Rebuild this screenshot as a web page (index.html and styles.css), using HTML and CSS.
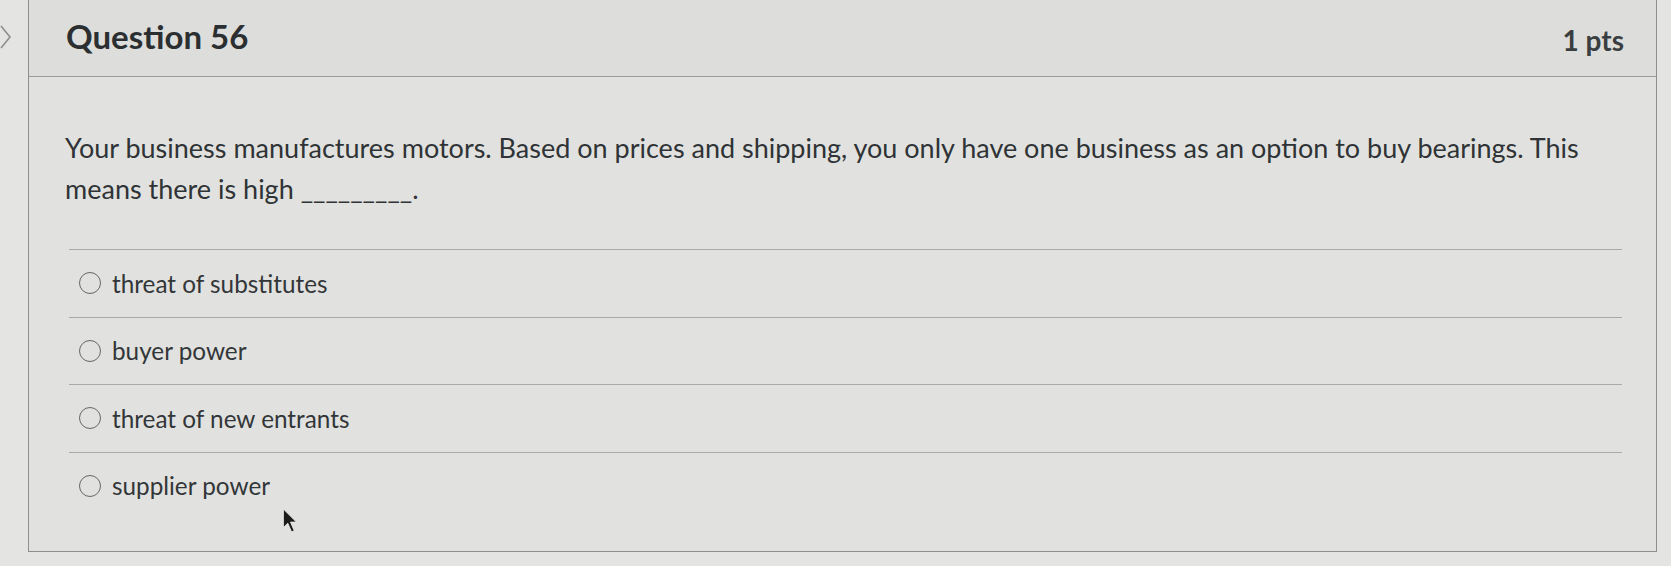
FILE: index.html
```html
<!DOCTYPE html>
<html lang="en">

<head>
  <meta charset="UTF-8">
  <meta name="viewport" content="width=device-width, initial-scale=1.0">
  <title>Question 56</title>
  <link rel="stylesheet" href="styles.css">
</head>

<body>
  <div class="page">
    <!-- side toggle -->
    <div class="side">
      <svg class="chevron" width="12" height="30" viewBox="0 0 12 30">
        <path d="M1 4 L10 15 L1 26" fill="none" stroke="#8d8f8d" stroke-width="1.6" />
      </svg>
    </div>

    <!-- question card -->
    <div class="question">
      <div class="header">
        <span class="name">Question 56</span>
        <span class="points">1 pts</span>
      </div>

      <div class="content">
        <p class="text">
          Your business manufactures motors. Based on prices and shipping, you only have one business as an option to buy bearings. This means there is high _________.
        </p>

        <div class="answers">
          <label class="answer"><span class="radio"></span>threat of substitutes</label>
          <label class="answer"><span class="radio"></span>buyer power</label>
          <label class="answer"><span class="radio"></span>threat of new entrants</label>
          <label class="answer"><span class="radio"></span>supplier power</label>
        </div>
      </div>

      <!-- mouse pointer -->
      <svg class="cursor" width="18" height="26" viewBox="0 0 16 24">
        <path d="M1 1 L1 18 L5 14 L8.5 22 L11 21 L7.5 13 L13 13 Z" fill="#1c1c1c" stroke="#e9e9e6" stroke-width="0.8" />
      </svg>
    </div>
  </div>
</body>

</html>
```

FILE: styles.css
```css
/* reset start */
html,
body {
  margin: 0;
  padding: 0;
}

body {
  background: #e4e5e2;
  font-family: Lato, "Open Sans", sans-serif;
  color: #353a3d;
}

p {
  margin: 0;
}

/* reset end */

.page {
  display: flex;
  height: 566px;
  overflow: hidden;
}

/* side start */
.side {
  width: 28px;
  flex: none;
}

.side .chevron {
  display: block;
  margin-top: 22px;
}

/* side end */

/* question start */
.question {
  position: relative;
  width: 1627px;
  height: 551px;
  border: 1.5px solid #8e908e;
  border-top: none;
  background: #e1e2df;
}

.header {
  display: flex;
  justify-content: space-between;
  align-items: center;
  height: 76px;
  padding: 0 32px 0 37px;
  border-bottom: 1.5px solid #9a9c9a;
  background: #dddedb;
}

.header .name {
  font-size: 33px;
  font-weight: 700;
  color: #2c2f31;
  padding-bottom: 4px;
}

.header .points {
  font-size: 28px;
  font-weight: 700;
  color: #3a3e41;
  padding-top: 4px;
}

.content {
  padding: 50px 34px 0 36px;
}

.text {
  font-size: 27px;
  line-height: 41px;
  color: #2f3336;
}

.answers {
  margin: 40px 0 0 4px;
}

.answer {
  display: flex;
  align-items: center;
  height: 66.5px;
  border-top: 1.5px solid #a9aba9;
  font-size: 24.3px;
  color: #333639;
}

.answer .radio {
  width: 20px;
  height: 20px;
  margin: 0 11px 0 10px;
  border: 1.7px solid #656866;
  border-radius: 50%;
  flex: none;
}

.cursor {
  position: absolute;
  left: 253px;
  top: 508px;
}

/* question end */
```
